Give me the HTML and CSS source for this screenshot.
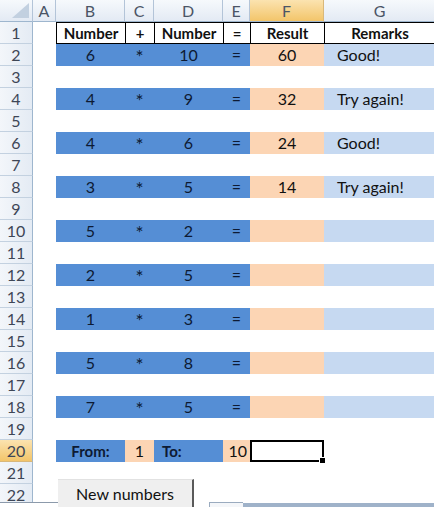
FILE: index.html
```html
<!DOCTYPE html>
<html>
<head>
<meta charset="utf-8">
<link rel="stylesheet" href="styles.css">
</head>
<body>
<div class="sheet">
  <div class="row hdr">
    <div class="corner"><div class="tri"></div></div>
    <div class="ch">A</div><div class="ch">B</div><div class="ch">C</div><div class="ch">D</div><div class="ch">E</div><div class="ch sel">F</div><div class="ch">G</div>
  </div>
  <div class="row"><div class="rh">1</div><div class="c"></div><div class="c th">Number</div><div class="c th">+</div><div class="c th">Number</div><div class="c th">=</div><div class="c th">Result</div><div class="c th last">Remarks</div></div>
  <div class="row"><div class="rh">2</div><div class="c"></div><div class="c b">6</div><div class="c b ast">*</div><div class="c b">10</div><div class="c b">=</div><div class="c p">60</div><div class="c l">Good!</div></div>
  <div class="row"><div class="rh">3</div><div class="c"></div><div class="c"></div><div class="c"></div><div class="c"></div><div class="c"></div><div class="c"></div><div class="c"></div></div>
  <div class="row"><div class="rh">4</div><div class="c"></div><div class="c b">4</div><div class="c b ast">*</div><div class="c b">9</div><div class="c b">=</div><div class="c p">32</div><div class="c l">Try again!</div></div>
  <div class="row"><div class="rh">5</div><div class="c"></div><div class="c"></div><div class="c"></div><div class="c"></div><div class="c"></div><div class="c"></div><div class="c"></div></div>
  <div class="row"><div class="rh">6</div><div class="c"></div><div class="c b">4</div><div class="c b ast">*</div><div class="c b">6</div><div class="c b">=</div><div class="c p">24</div><div class="c l">Good!</div></div>
  <div class="row"><div class="rh">7</div><div class="c"></div><div class="c"></div><div class="c"></div><div class="c"></div><div class="c"></div><div class="c"></div><div class="c"></div></div>
  <div class="row"><div class="rh">8</div><div class="c"></div><div class="c b">3</div><div class="c b ast">*</div><div class="c b">5</div><div class="c b">=</div><div class="c p">14</div><div class="c l">Try again!</div></div>
  <div class="row"><div class="rh">9</div><div class="c"></div><div class="c"></div><div class="c"></div><div class="c"></div><div class="c"></div><div class="c"></div><div class="c"></div></div>
  <div class="row"><div class="rh">10</div><div class="c"></div><div class="c b">5</div><div class="c b ast">*</div><div class="c b">2</div><div class="c b">=</div><div class="c p"></div><div class="c l"></div></div>
  <div class="row"><div class="rh">11</div><div class="c"></div><div class="c"></div><div class="c"></div><div class="c"></div><div class="c"></div><div class="c"></div><div class="c"></div></div>
  <div class="row"><div class="rh">12</div><div class="c"></div><div class="c b">2</div><div class="c b ast">*</div><div class="c b">5</div><div class="c b">=</div><div class="c p"></div><div class="c l"></div></div>
  <div class="row"><div class="rh">13</div><div class="c"></div><div class="c"></div><div class="c"></div><div class="c"></div><div class="c"></div><div class="c"></div><div class="c"></div></div>
  <div class="row"><div class="rh">14</div><div class="c"></div><div class="c b">1</div><div class="c b ast">*</div><div class="c b">3</div><div class="c b">=</div><div class="c p"></div><div class="c l"></div></div>
  <div class="row"><div class="rh">15</div><div class="c"></div><div class="c"></div><div class="c"></div><div class="c"></div><div class="c"></div><div class="c"></div><div class="c"></div></div>
  <div class="row"><div class="rh">16</div><div class="c"></div><div class="c b">5</div><div class="c b ast">*</div><div class="c b">8</div><div class="c b">=</div><div class="c p"></div><div class="c l"></div></div>
  <div class="row"><div class="rh">17</div><div class="c"></div><div class="c"></div><div class="c"></div><div class="c"></div><div class="c"></div><div class="c"></div><div class="c"></div></div>
  <div class="row"><div class="rh">18</div><div class="c"></div><div class="c b">7</div><div class="c b ast">*</div><div class="c b">5</div><div class="c b">=</div><div class="c p"></div><div class="c l"></div></div>
  <div class="row"><div class="rh">19</div><div class="c"></div><div class="c"></div><div class="c"></div><div class="c"></div><div class="c"></div><div class="c"></div><div class="c"></div></div>
  <div class="row"><div class="rh sel">20</div><div class="c"></div><div class="c b bold">From:</div><div class="c p">1</div><div class="c b bold left">To:</div><div class="c p right">10</div><div class="c active"><span class="handle"></span></div><div class="c"></div></div>
  <div class="row"><div class="rh">21</div><div class="c"></div><div class="c"></div><div class="c"></div><div class="c"></div><div class="c"></div><div class="c"></div><div class="c"></div></div>
  <div class="row"><div class="rh">22</div><div class="c"></div><div class="c"></div><div class="c"></div><div class="c"></div><div class="c"></div><div class="c"></div><div class="c"></div></div>
</div>
<div class="strip"><div class="tab1"></div><div class="gap"></div><div class="tab2"></div><div class="bar"></div></div>
<button class="btn">New numbers</button>
</body>
</html>
```
FILE: styles.css
```css
html, body {
  margin: 0;
  padding: 0;
  width: 434px;
  height: 507px;
  overflow: hidden;
  background: #fff;
  font-family: Lato, "Noto Sans", sans-serif;
  font-size: 16px;
  color: #111;
}
.sheet {
  display: flex;
  flex-direction: column;
}
.row {
  display: grid;
  grid-template-columns: 33px 23px 69px 29px 69px 27px 74px 112px;
  height: 22px;
}
.row > div {
  box-sizing: border-box;
  height: 22px;
  line-height: 22px;
  text-align: center;
  white-space: nowrap;
  overflow: visible;
}
.hdr > div {
  background: linear-gradient(#f6f9fc, #e3eaf4);
  border-right: 1px solid #b3c4d8;
  border-bottom: 1px solid #9eb6ce;
  color: #4b5566;
}
.hdr .ch.sel {
  background: linear-gradient(#fbe3b0, #f3c56a);
  border-right-color: #d9b87a;
}
.corner {
  position: relative;
}
.tri {
  position: absolute;
  right: 3px;
  bottom: 3px;
  width: 0;
  height: 0;
  border-left: 17px solid transparent;
  border-bottom: 15px solid #c2d0e0;
}
.rh {
  background: linear-gradient(90deg, #f3f6fa, #e4ebf4);
  border-right: 1px solid #9eb6ce;
  border-bottom: 1px solid #c3d1e0;
  color: #3e4656;
}
.rh.sel {
  background: linear-gradient(#fbe3b0, #f3c56a);
  border-bottom-color: #d9b87a;
}
.th {
  font-weight: bold;
  font-size: 15px;
  border-top: 1px solid #000;
  border-bottom: 1px solid #000;
  border-left: 1px solid #000;
  line-height: 20px !important;
}
.th.last {
  border-right: 1px solid #000;
}
.b {
  background: #558ed5;
  color: #0d1a33;
}
.ast {
  font-size: 19px;
  line-height: 26px !important;
}
.p {
  background: #fcd5b4;
}
.l {
  background: #c6d9f1;
  text-align: left !important;
  padding-left: 13px;
}
.bold {
  font-weight: bold;
  font-size: 15px;
}
.left {
  text-align: left !important;
  padding-left: 8px;
}
.right {
  text-align: right !important;
  padding-right: 3px;
}
.active {
  position: relative;
  border: 2px solid #000;
}
.handle {
  position: absolute;
  right: -4px;
  bottom: -4px;
  width: 5px;
  height: 5px;
  background: #000;
  border: 1px solid #fff;
}
.strip {
  position: absolute;
  left: 0;
  top: 502px;
  width: 434px;
  height: 5px;
  display: flex;
}
.tab1 {
  width: 78px;
  box-sizing: border-box;
  border-top: 1px solid #8c9aab;
  border-right: 1px solid #8c9aab;
  background: #fff;
}
.gap {
  width: 131px;
}
.tab2 {
  width: 34px;
  box-sizing: border-box;
  border-top: 1px solid #9aabbf;
  border-left: 1px solid #9aabbf;
  background: #f4f6f9;
}
.bar {
  flex: 1;
  margin-top: 1px;
  background: #9fb2c9;
}
.btn {
  position: absolute;
  left: 58px;
  top: 479px;
  width: 136px;
  height: 40px;
  margin: 0;
  padding: 0 0 12px 0;
  box-sizing: border-box;
  background: #efefef;
  border: none;
  border-top: 1px solid #e2e2e2;
  border-right: 2px solid #5a5a5a;
  font-family: Lato, "Noto Sans", sans-serif;
  font-size: 16px;
  color: #111;
  line-height: 28px;
  text-align: center;
}
```
